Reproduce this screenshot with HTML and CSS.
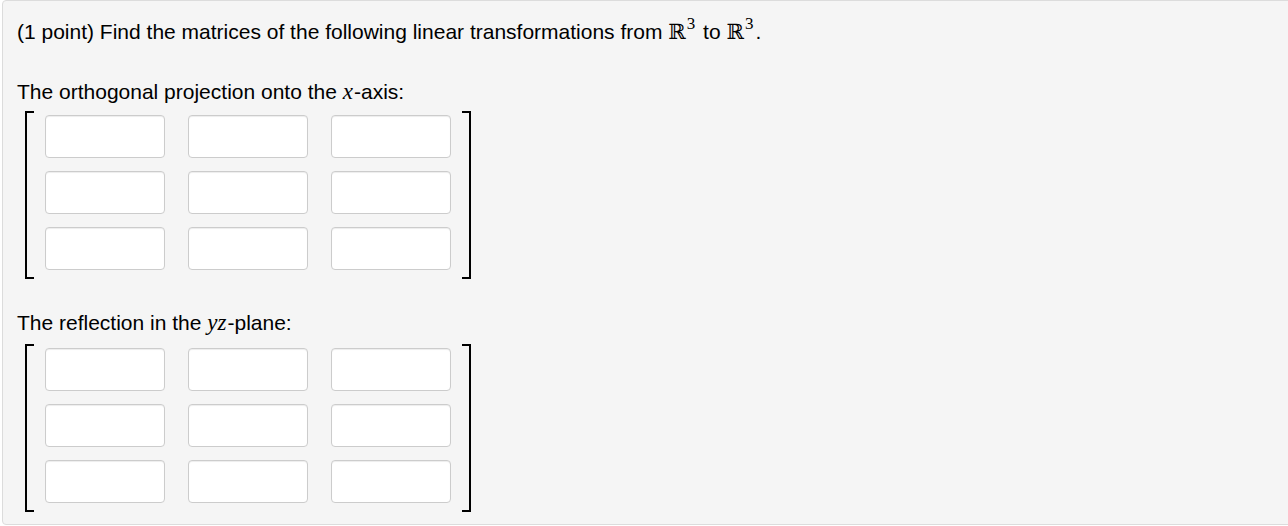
FILE: index.html
```html
<!DOCTYPE html>
<html>
<head>
<meta charset="utf-8">
<link rel="stylesheet" href="styles.css">
</head>
<body>
<div class="problem">
  <p class="intro">(1 point) Find the matrices of the following linear transformations from <span class="bb">ℝ</span><sup class="sup">3</sup> to <span class="bb">ℝ</span><sup class="sup">3</sup>.</p>
  <p class="label">The orthogonal projection onto the <span class="mi">x</span>-axis:</p>
  <div class="matrix">
    <div class="br br-left"></div>
    <div class="cells">
      <input class="cell"><input class="cell"><input class="cell">
      <input class="cell"><input class="cell"><input class="cell">
      <input class="cell"><input class="cell"><input class="cell">
    </div>
    <div class="br br-right"></div>
  </div>
  <p class="label label2">The reflection in the <span class="mi">yz</span>-plane:</p>
  <div class="matrix matrix2">
    <div class="br br-left"></div>
    <div class="cells">
      <input class="cell"><input class="cell"><input class="cell">
      <input class="cell"><input class="cell"><input class="cell">
      <input class="cell"><input class="cell"><input class="cell">
    </div>
    <div class="br br-right"></div>
  </div>
</div>
</body>
</html>
```
FILE: styles.css
```css
html, body {
  margin: 0;
  padding: 0;
  background: #ffffff;
}
body {
  font-family: "Liberation Sans", Arial, sans-serif;
  font-size: 21px;
  color: #000;
}
.problem {
  margin-left: 2px;
  width: 1300px;
  height: 525px;
  box-sizing: border-box;
  background: #f5f5f5;
  border: 1px solid #dcdcdc;
  border-radius: 4px;
  padding: 19px 14px 0 14px;
}
p {
  margin: 0;
  line-height: 24px;
}
.intro {
  margin-bottom: 36px;
}
.bb {
  font-family: "DejaVu Serif", serif;
  font-size: 21px;
}
.sup {
  font-family: "Liberation Serif", serif;
  font-size: 17px;
  line-height: 0;
  vertical-align: 10px;
  margin-left: 1px;
  margin-right: 2px;
}
.mi {
  font-family: "Liberation Serif", serif;
  font-style: italic;
  font-size: 23px;
  margin-right: 1px;
}
.matrix {
  display: flex;
  align-items: flex-start;
  margin-top: 7px;
  margin-left: 8px;
}
.matrix2 {
  margin-top: 9px;
}
.br {
  width: 7px;
  height: 164px;
  border-top: 2px solid #000;
  border-bottom: 2px solid #000;
}
.br-left {
  border-left: 2px solid #000;
}
.br-right {
  border-right: 2px solid #000;
}
.cells {
  display: grid;
  grid-template-columns: repeat(3, 120px);
  grid-auto-rows: 43px;
  column-gap: 23px;
  row-gap: 13px;
  margin: 4px 11px 0 11px;
}
.cell {
  box-sizing: border-box;
  width: 120px;
  height: 43px;
  margin: 0;
  padding: 0;
  background: #fff;
  border: 1px solid #cccccc;
  border-radius: 4px;
  box-shadow: inset 0 1px 1px rgba(0,0,0,0.075);
}
.label2 {
  margin-top: 32px;
}
```
